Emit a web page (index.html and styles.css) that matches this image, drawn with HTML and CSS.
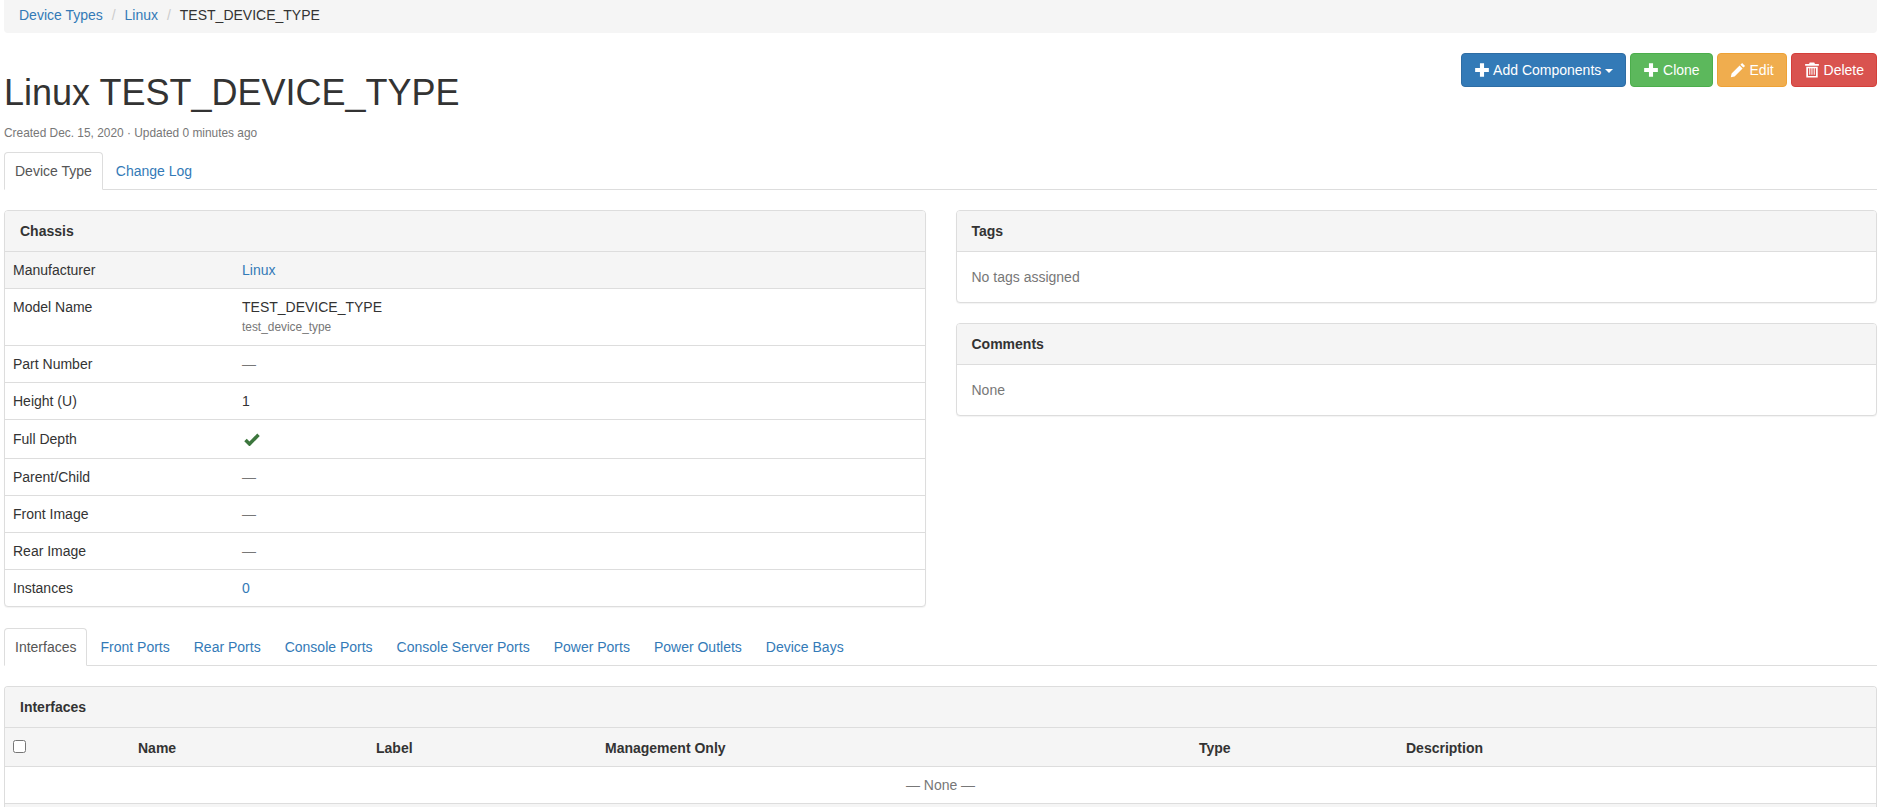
FILE: index.html
```html
<!DOCTYPE html>
<html lang="en">
    <head>
        <meta charset="UTF-8" />
        <title>Linux TEST_DEVICE_TYPE</title>
        <link rel="stylesheet" href="styles.css">
    </head>
    <body>
        <ol class="breadcrumb">
            <li><a href="#">Device Types</a></li>
            <li><a href="#">Linux</a></li>
            <li class="active">TEST_DEVICE_TYPE</li>
        </ol>

        <div class="page-head">
            <div class="controls">
                <a class="btn btn-primary" href="#">
                    <svg class="icon" viewBox="0 0 14 14"><path d="M5.2 1h3.600v4.200H13v3.600H8.800V13H5.200V8.800H1V5.200h4.200z"/></svg>
                    Add Components <span class="caret"></span>
                </a>
                <a class="btn btn-success" href="#">
                    <svg class="icon" viewBox="0 0 14 14"><path d="M5.2 1h3.600v4.200H13v3.600H8.800V13H5.200V8.800H1V5.200h4.200z"/></svg>
                    Clone
                </a>
                <a class="btn btn-warning" href="#">
                    <svg class="icon" viewBox="0 0 14 14"><path d="M10.600.8l2.600 2.600-1.500 1.500-2.600-2.600zM8.400 3l2.600 2.600-7 7-3.300.7.700-3.300z"/></svg>
                    Edit
                </a>
                <a class="btn btn-danger" href="#">
                    <svg class="icon" viewBox="0 0 14 14"><path fill-rule="evenodd" d="M5 .5h4l.6 1.200H13v1.600H1V1.700h3.400zM2 4.200h10v9.300H2zM4.600 5.500H3.500v6.700h7V5.500H9.400v5.600H8.500V5.500H7.400v5.600H6.500V5.500H5.500v5.600h-.9z"/></svg>
                    Delete
                </a>
            </div>
            <h1>Linux TEST_DEVICE_TYPE</h1>
            <p class="text-muted small">Created Dec. 15, 2020 &middot; Updated 0 minutes ago</p>
        </div>

        <ul class="nav-tabs">
            <li class="active"><a href="#">Device Type</a></li>
            <li><a href="#">Change Log</a></li>
        </ul>

        <div class="row">
            <div class="panel">
                <div class="panel-heading"><strong>Chassis</strong></div>
                <table class="attr-table">
                    <tr class="hover"><td>Manufacturer</td><td><a href="#">Linux</a></td></tr>
                    <tr>
                        <td>Model Name</td>
                        <td>TEST_DEVICE_TYPE<div class="text-muted small">test_device_type</div></td>
                    </tr>
                    <tr><td>Part Number</td><td><span class="text-muted">&mdash;</span></td></tr>
                    <tr><td>Height (U)</td><td>1</td></tr>
                    <tr class="middle">
                        <td>Full Depth</td>
                        <td><svg class="check" viewBox="0 0 16 13"><path d="M1.500 7l4 4L14.500 1.800"/></svg></td>
                    </tr>
                    <tr><td>Parent/Child</td><td><span class="text-muted">&mdash;</span></td></tr>
                    <tr><td>Front Image</td><td><span class="text-muted">&mdash;</span></td></tr>
                    <tr><td>Rear Image</td><td><span class="text-muted">&mdash;</span></td></tr>
                    <tr><td>Instances</td><td><a href="#">0</a></td></tr>
                </table>
            </div>
            <div class="side">
                <div class="panel">
                    <div class="panel-heading"><strong>Tags</strong></div>
                    <div class="panel-body text-muted">No tags assigned</div>
                </div>
                <div class="panel">
                    <div class="panel-heading"><strong>Comments</strong></div>
                    <div class="panel-body text-muted">None</div>
                </div>
            </div>
        </div>

        <ul class="nav-tabs lower">
            <li class="active"><a href="#">Interfaces</a></li>
            <li><a href="#">Front Ports</a></li>
            <li><a href="#">Rear Ports</a></li>
            <li><a href="#">Console Ports</a></li>
            <li><a href="#">Console Server Ports</a></li>
            <li><a href="#">Power Ports</a></li>
            <li><a href="#">Power Outlets</a></li>
            <li><a href="#">Device Bays</a></li>
        </ul>

        <div class="panel list-panel">
            <div class="panel-heading"><strong>Interfaces</strong></div>
            <table class="list-table">
                <colgroup>
                    <col class="col-check"><col class="col-name"><col class="col-label">
                    <col class="col-mgmt"><col class="col-type"><col>
                </colgroup>
                <thead>
                    <tr>
                        <th><input type="checkbox"></th>
                        <th>Name</th>
                        <th>Label</th>
                        <th>Management Only</th>
                        <th>Type</th>
                        <th>Description</th>
                    </tr>
                </thead>
                <tbody>
                    <tr><td colspan="6" class="none">&mdash; None &mdash;</td></tr>
                </tbody>
            </table>
            <div class="panel-footer"></div>
        </div>
    </body>
</html>
```

FILE: styles.css
```css
* {
    box-sizing: border-box;
}
body {
    margin: 0;
    padding: 0 2px 0 4px;
    font-family: "Liberation Sans", Arial, sans-serif;
    font-size: 14px;
    line-height: 20px;
    color: #333;
    background-color: #fff;
}
a {
    color: #337ab7;
    text-decoration: none;
}
.text-muted {
    color: #777;
}
.small {
    font-size: 11.9px;
}

/* breadcrumb, sits scrolled a little under the top edge */
.breadcrumb {
    display: flex;
    gap: 4px;
    list-style: none;
    margin: 0;
    padding: 5px 15px 8px;
    background-color: #f5f5f5;
    border-radius: 0 0 4px 4px;
}
.breadcrumb li + li::before {
    content: "/\00a0";
    padding: 0 5px;
    color: #ccc;
}
.breadcrumb .active {
    color: #333;
}

/* title and buttons */
.page-head {
    position: relative;
}
.controls {
    position: absolute;
    top: 20px;
    right: 0;
    display: flex;
    gap: 4px;
}
.btn {
    display: block;
    padding: 6px 12px;
    border: 1px solid transparent;
    border-radius: 4px;
    color: #fff;
    white-space: nowrap;
}
.btn-primary {
    background-color: #337ab7;
    border-color: #2e6da4;
}
.btn-success {
    background-color: #5cb85c;
    border-color: #4cae4c;
}
.btn-warning {
    background-color: #f0ad4e;
    border-color: #eea236;
}
.btn-danger {
    background-color: #d9534f;
    border-color: #d43f3a;
}
.icon {
    width: 16px;
    height: 16px;
    fill: #fff;
    vertical-align: -3px;
}
.caret {
    display: inline-block;
    vertical-align: middle;
    border-top: 4px solid #fff;
    border-left: 4px solid transparent;
    border-right: 4px solid transparent;
}
h1 {
    margin: 0;
    padding-top: 40px;
    font-size: 36px;
    font-weight: 500;
    line-height: 40px;
}
.page-head p {
    margin: 10px 0 0;
    line-height: 20px;
}

/* tabs */
.nav-tabs {
    display: flex;
    list-style: none;
    gap: 2px;
    margin: 9px 0 0;
    padding: 0;
    border-bottom: 1px solid #ddd;
}
.nav-tabs a {
    display: block;
    margin-bottom: -1px;
    padding: 8px 10px;
    border: 1px solid transparent;
    border-radius: 4px 4px 0 0;
}
.nav-tabs .active a {
    color: #555;
    background-color: #fff;
    border-color: #ddd #ddd #fff;
}
.nav-tabs.lower {
    margin-top: 21px;
}

/* panels */
.row {
    display: grid;
    grid-template-columns: 1fr 1fr;
    gap: 30px;
    margin-top: 20px;
}
.panel {
    background-color: #fff;
    border: 1px solid #ddd;
    border-radius: 4px;
    box-shadow: 0 1px 1px rgba(0, 0, 0, 0.05);
}
.side {
    display: flex;
    flex-direction: column;
    gap: 20px;
}
.panel-heading {
    padding: 10px 15px;
    background-color: #f5f5f5;
    border-bottom: 1px solid #ddd;
    border-radius: 3px 3px 0 0;
}
.panel-body {
    padding: 15px;
    height: 50px;
}
.list-panel {
    margin-top: 20px;
    border-bottom: 0;
    border-radius: 4px 4px 0 0;
    box-shadow: none;
}
.panel-footer {
    height: 4px;
    background-color: #f5f5f5;
}

/* tables */
table {
    width: 100%;
    border-collapse: collapse;
    table-layout: fixed;
}
td,
th {
    padding: 8px;
    text-align: left;
    vertical-align: top;
}
.attr-table td {
    border-top: 1px solid #ddd;
}
.attr-table tr:first-child td {
    border-top: 0;
}
.attr-table td:first-child {
    width: 229px;
}
.attr-table .middle td {
    vertical-align: middle;
}
.hover {
    background-color: #f5f5f5;
}
.check {
    display: block;
    width: 16px;
    height: 13px;
    margin: 5px 0 4px 2px;
    fill: none;
    stroke: #3c763d;
    stroke-width: 3.5;
}
.list-table th {
    padding-top: 10px;
    background-color: #f5f5f5;
    border-bottom: 1px solid #ddd;
}
.list-table input {
    display: block;
    margin: 2px 0 0;
}
.list-table .none {
    color: #777;
    text-align: center;
    border-bottom: 1px solid #ddd;
}
.col-check {
    width: 125px;
}
.col-name {
    width: 238px;
}
.col-label {
    width: 229px;
}
.col-mgmt {
    width: 594px;
}
.col-type {
    width: 207px;
}
```
